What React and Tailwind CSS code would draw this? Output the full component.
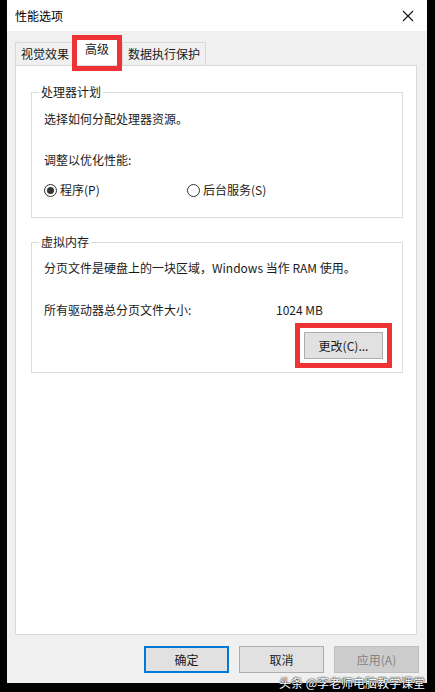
import React from "react";

const F = { fontFamily: '"Noto Sans CJK SC", "Noto Sans", sans-serif' };

function Radio({ checked }) {
  return (
    <span className="w-[13px] h-[13px] rounded-full border border-[#333] bg-white flex items-center justify-center">
      {checked && <span className="w-[7px] h-[7px] rounded-full bg-[#333]" />}
    </span>
  );
}

function Group({ label, children, className }) {
  return (
    <div className={"relative border border-[#dcdcdc] " + className}>
      <span className="absolute left-[7px] top-[-10px] bg-white px-[2px] text-[12px] leading-[18px] text-[#1a1a1a]">{label}</span>
      {children}
    </div>
  );
}

export default function App() {
  return (
    <div className="w-[435px] h-[692px] bg-black relative overflow-hidden" style={F}>
      <div className="ml-[7px] w-[420px] h-[683px] bg-[#f0f0f0] flex flex-col">
        <div className="h-[31px] bg-white flex items-center justify-between pl-[8px] pr-[12px]">
          <span className="text-[12px] text-black">性能选项</span>
          <svg width="14" height="14" viewBox="0 0 14 14"><path d="M2 2 L12 12 M12 2 L2 12" stroke="#111" strokeWidth="1.1" /></svg>
        </div>
        <div className="relative mt-[6px] ml-[8px] h-[28px] flex items-end">
          <div className="h-[23px] px-[5px] border border-b-0 border-[#d9d9d9] bg-[#f0f0f0] flex items-center text-[12px] text-[#1a1a1a]">视觉效果</div>
          <div className="h-[28px] w-[46px] bg-white flex items-start justify-center pt-[3px] text-[12px] text-[#1a1a1a] z-10 -ml-[1px]">高级</div>
          <div className="h-[23px] px-[5px] border border-b-0 border-[#d9d9d9] bg-[#f0f0f0] flex items-center text-[12px] text-[#1a1a1a] ml-[2px]">数据执行保护</div>
          <div className="absolute left-[57px] top-[-2px] w-[50px] h-[36px] border-[5px] border-[#ef3236] z-20" />
        </div>
        <div className="ml-[8px] mr-[10px] h-[570px] bg-white border border-[#d9d9d9] pt-[26px] px-[15px] pr-[13px] flex flex-col text-[12px] text-[#1a1a1a]">
          <Group label="处理器计划" className="h-[126px] pl-[12px] pt-[17px]">
            <div className="leading-[18px]">选择如何分配处理器资源。</div>
            <div className="leading-[18px] mt-[23px]">调整以优化性能:</div>
            <div className="flex items-center mt-[12px] h-[18px]">
              <div className="flex items-center gap-[3px] w-[143px]"><Radio checked /><span>程序(P)</span></div>
              <div className="flex items-center gap-[3px]"><Radio /><span>后台服务(S)</span></div>
            </div>
          </Group>
          <Group label="虚拟内存" className="mt-[24px] h-[131px] pl-[12px] pt-[16px]">
            <div className="leading-[18px]">分页文件是硬盘上的一块区域，Windows 当作 RAM 使用。</div>
            <div className="flex leading-[18px] mt-[24px]">
              <span className="w-[232px]">所有驱动器总分页文件大小:</span>
              <span>1024 MB</span>
            </div>
            <div className="flex justify-end pr-[10px] mt-[4px]">
              <div className="border-[5px] border-[#ef3236] p-[4px]">
                <div className="w-[79px] h-[27px] bg-[#e1e1e1] border border-[#adadad] flex items-center justify-center">更改(C)...</div>
              </div>
            </div>
          </Group>
        </div>
        <div className="flex justify-end gap-[10px] mr-[8px] mt-[11px] text-[12px] text-[#1a1a1a]">
          <div className="w-[85px] h-[27px] bg-[#e1e1e1] border-2 border-[#0078d7] flex items-center justify-center">确定</div>
          <div className="w-[85px] h-[27px] bg-[#e1e1e1] border border-[#adadad] flex items-center justify-center">取消</div>
          <div className="w-[85px] h-[27px] bg-[#cccccc] border border-[#bfbfbf] flex items-center justify-center text-[#838383]">应用(A)</div>
        </div>
      </div>
      <div className="absolute right-[10px] top-[676px] text-[12px] leading-[14px] text-white" style={{ textShadow: "0 0 2px #000, 0 0 1px #000" }}>头条 @李老师电脑教学课堂</div>
    </div>
  );
}
